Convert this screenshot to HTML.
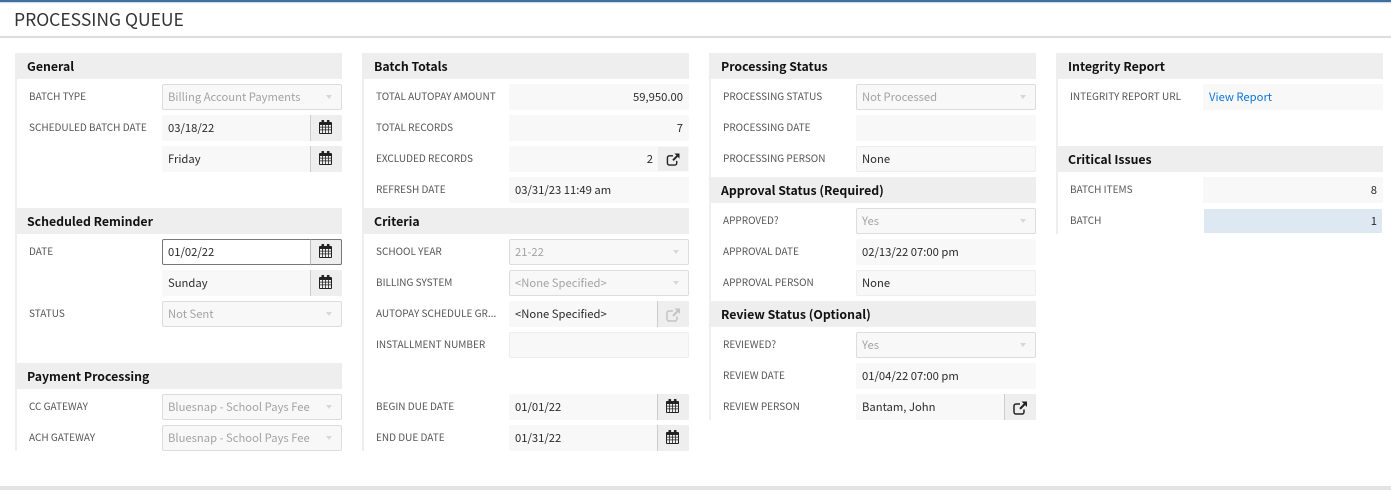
<!DOCTYPE html>
<html lang="en"><head><meta charset="utf-8"><title>Processing Queue</title>
<style>
html,body{margin:0;padding:0;background:#fff}
body{width:1391px;height:491px;position:relative;overflow:hidden;font-family:"Noto Sans CJK JP","Liberation Sans",sans-serif;color:#333}
.a{position:absolute;box-sizing:border-box;white-space:nowrap}
.top{left:0;top:0;width:1391px;height:2px;background:#3f6f9f;box-shadow:0 1px 1px #c8d4e0}
.title{left:14px;top:8px;font-size:17.5px;line-height:24px;color:#333}
.rule{left:0;top:36px;width:1391px;height:2px;background:#ddd}
.foot{left:0;top:486px;width:1391px;height:4px;background:#e4e4e4}
.side{width:2px;background:#eee}
.h{width:327px;height:26px;background:#eee;font-size:12.3px;font-weight:700;line-height:26px;padding-left:12px;color:#111}
.l{font-size:10px;line-height:16px;color:#555;width:132px}
.f{width:180px;height:26px;background:#f8f8f8;border-radius:2px;font-size:11.25px;line-height:26px;padding:0 6px;color:#2b2b2b}
.s{border:1px solid #ddd;line-height:24px;padding:0 5px;color:#a3a3a3}
.s:after{content:"";position:absolute;right:9px;top:10px;border:3.5px solid transparent;border-top:4px solid #d8d8d8;border-bottom:0}
.r{text-align:right}
.b{width:32px;height:26px;background:#eee;border-left:1px solid #ccc;border-radius:0 2px 2px 0}
.b svg{position:absolute;left:8px;top:5px}
.b svg.e{top:7px}
.x{border-left:0;top:1px;height:24px;width:30px}
</style></head>
<body>
<svg width="0" height="0" style="position:absolute"><defs>
<symbol id="cal" viewBox="0 0 13 14"><path fill="#222" d="M3 0h1.6a.5.5 0 0 1 .5.5V2h2.8V.5A.5.5 0 0 1 8.400 0H10a.5.5 0 0 1 .5.500V2H12a1 1 0 0 1 1 1v10a1 1 0 0 1-1 1H1a1 1 0 0 1-1-1V3a1 1 0 0 1 1-1h1.500V.5A.5.5 0 0 1 3 0z"/><path fill="#f0f0f0" d="M1 5h2.100v1.700H1zM3.900 5h2.200v1.700H3.900zM6.900 5h2.200v1.700H6.900zM9.900 5H12v1.700H9.900zM1 7.500h2.100v2H1zM3.900 7.500h2.200v2H3.900zM6.900 7.500h2.200v2H6.900zM9.900 7.500H12v2H9.900zM1 10.300h2.100V13H1zM3.900 10.300h2.200V13H3.900zM6.900 10.300h2.200V13H6.900zM9.900 10.300H12V13H9.900z"/></symbol>
<symbol id="ext" viewBox="0 0 14 14"><path fill="none" stroke="currentColor" stroke-width="1.500" d="M11 8.500V11a2 2 0 0 1-2 2H3a2 2 0 0 1-2-2V5a2 2 0 0 1 2-2h4"/><path fill="currentColor" d="M8.500 0.500H14V6l-1.900-1.900-4.300 4.500-1.500-1.500 4.400-4.500z"/></symbol>
</defs></svg>

<div class="a top"></div>
<div class="a title">PROCESSING QUEUE</div>
<div class="a rule"></div>
<div class="a foot"></div>

<div class="a side" style="left:15px;top:53px;height:398px"></div>
<div class="a side" style="left:362px;top:53px;height:398px"></div>
<div class="a side" style="left:709px;top:53px;height:367px"></div>
<div class="a side" style="left:1056px;top:53px;height:181px"></div>

<!-- Column 1 -->
<div class="a h" style="left:15px;top:53px">General</div>
<div class="a l" style="left:29px;top:88px">BATCH TYPE</div>
<div class="a f s" style="left:162px;top:84px">Billing Account Payments</div>
<div class="a l" style="left:29px;top:119px">SCHEDULED BATCH DATE</div>
<div class="a f" style="left:162px;top:115px">03/18/22</div>
<div class="a b" style="left:310px;top:115px"><svg width="13" height="14"><use href="#cal"/></svg></div>
<div class="a f" style="left:162px;top:146px">Friday</div>
<div class="a b" style="left:310px;top:146px"><svg width="13" height="14"><use href="#cal"/></svg></div>

<div class="a h" style="left:15px;top:208px">Scheduled Reminder</div>
<div class="a l" style="left:29px;top:243px">DATE</div>
<div class="a f" style="left:162px;top:239px;background:#fff;border:1px solid #777;line-height:24px;padding:0 5px">01/02/22</div>
<div class="a b" style="left:310px;top:239px;border:1px solid #777;border-left:1px solid #bbb"><svg width="13" height="14" style="left:8px;top:4px"><use href="#cal"/></svg></div>
<div class="a f" style="left:162px;top:270px">Sunday</div>
<div class="a b" style="left:310px;top:270px"><svg width="13" height="14"><use href="#cal"/></svg></div>
<div class="a l" style="left:29px;top:305px">STATUS</div>
<div class="a f s" style="left:162px;top:301px">Not Sent</div>

<div class="a h" style="left:15px;top:363px">Payment Processing</div>
<div class="a l" style="left:29px;top:398px">CC GATEWAY</div>
<div class="a f s" style="left:162px;top:394px">Bluesnap - School Pays Fee</div>
<div class="a l" style="left:29px;top:429px">ACH GATEWAY</div>
<div class="a f s" style="left:162px;top:425px">Bluesnap - School Pays Fee</div>

<!-- Column 2 -->
<div class="a h" style="left:362px;top:53px">Batch Totals</div>
<div class="a l" style="left:376px;top:88px">TOTAL AUTOPAY AMOUNT</div>
<div class="a f r" style="left:509px;top:84px">59,950.00</div>
<div class="a l" style="left:376px;top:119px">TOTAL RECORDS</div>
<div class="a f r" style="left:509px;top:115px">7</div>
<div class="a l" style="left:376px;top:150px">EXCLUDED RECORDS</div>
<div class="a f r" style="left:509px;top:146px;padding-right:36px">2<div class="a b x" style="right:1px;left:auto;color:#222"><svg width="14" height="13" style="left:8px;top:6px"><use href="#ext"/></svg></div></div>
<div class="a l" style="left:376px;top:181px">REFRESH DATE</div>
<div class="a f" style="left:509px;top:177px">03/31/23 11:49 am</div>

<div class="a h" style="left:362px;top:208px">Criteria</div>
<div class="a l" style="left:376px;top:243px">SCHOOL YEAR</div>
<div class="a f s" style="left:509px;top:239px">21-22</div>
<div class="a l" style="left:376px;top:274px">BILLING SYSTEM</div>
<div class="a f s" style="left:509px;top:270px">&lt;None Specified&gt;</div>
<div class="a l" style="left:376px;top:305px">AUTOPAY SCHEDULE GR...</div>
<div class="a f" style="left:509px;top:301px">&lt;None Specified&gt;</div>
<div class="a b" style="left:657px;top:301px;color:#c4c4c4"><svg class="e" width="14" height="14"><use href="#ext"/></svg></div>
<div class="a l" style="left:376px;top:336px">INSTALLMENT NUMBER</div>
<div class="a f" style="left:509px;top:332px;border:1px solid #eee"></div>
<div class="a l" style="left:376px;top:398px">BEGIN DUE DATE</div>
<div class="a f" style="left:509px;top:394px">01/01/22</div>
<div class="a b" style="left:657px;top:394px"><svg width="13" height="14"><use href="#cal"/></svg></div>
<div class="a l" style="left:376px;top:429px">END DUE DATE</div>
<div class="a f" style="left:509px;top:425px">01/31/22</div>
<div class="a b" style="left:657px;top:425px"><svg width="13" height="14"><use href="#cal"/></svg></div>

<!-- Column 3 -->
<div class="a h" style="left:709px;top:53px">Processing Status</div>
<div class="a l" style="left:723px;top:88px">PROCESSING STATUS</div>
<div class="a f s" style="left:856px;top:84px">Not Processed</div>
<div class="a l" style="left:723px;top:119px">PROCESSING DATE</div>
<div class="a f" style="left:856px;top:115px"></div>
<div class="a l" style="left:723px;top:150px">PROCESSING PERSON</div>
<div class="a f" style="left:856px;top:146px;border:1px solid #eee;line-height:24px;padding:0 5px">None</div>

<div class="a h" style="left:709px;top:177px">Approval Status (Required)</div>
<div class="a l" style="left:723px;top:212px">APPROVED?</div>
<div class="a f s" style="left:856px;top:208px">Yes</div>
<div class="a l" style="left:723px;top:243px">APPROVAL DATE</div>
<div class="a f" style="left:856px;top:239px">02/13/22 07:00 pm</div>
<div class="a l" style="left:723px;top:274px">APPROVAL PERSON</div>
<div class="a f" style="left:856px;top:270px;border:1px solid #eee;line-height:24px;padding:0 5px">None</div>

<div class="a h" style="left:709px;top:301px">Review Status (Optional)</div>
<div class="a l" style="left:723px;top:336px">REVIEWED?</div>
<div class="a f s" style="left:856px;top:332px">Yes</div>
<div class="a l" style="left:723px;top:367px">REVIEW DATE</div>
<div class="a f" style="left:856px;top:363px">01/04/22 07:00 pm</div>
<div class="a l" style="left:723px;top:398px">REVIEW PERSON</div>
<div class="a f" style="left:856px;top:394px">Bantam, John</div>
<div class="a b" style="left:1004px;top:394px;color:#222"><svg class="e" width="14" height="14"><use href="#ext"/></svg></div>

<!-- Column 4 -->
<div class="a h" style="left:1056px;top:53px">Integrity Report</div>
<div class="a l" style="left:1070px;top:88px">INTEGRITY REPORT URL</div>
<div class="a f" style="left:1203px;top:84px;color:#0b76d6">View Report</div>
<div class="a h" style="left:1056px;top:146px">Critical Issues</div>
<div class="a l" style="left:1070px;top:181px">BATCH ITEMS</div>
<div class="a f r" style="left:1203px;top:177px">8</div>
<div class="a l" style="left:1070px;top:212px">BATCH</div>
<div class="a f r" style="left:1203px;top:208px;background:#dee8f3;border:1px solid #fff;line-height:24px;padding:0 5px">1</div>
</body></html>
